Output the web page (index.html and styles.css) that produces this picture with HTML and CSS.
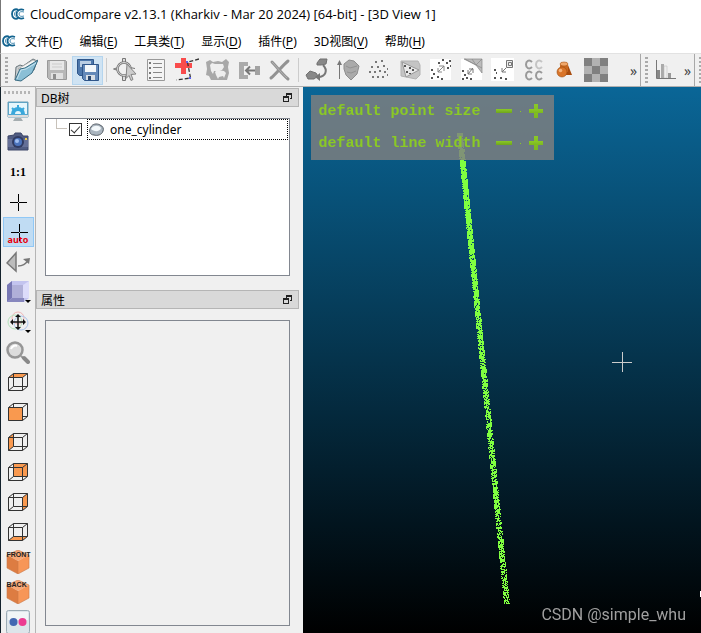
FILE: index.html
```html
<!DOCTYPE html>
<html lang="zh-CN">
<head>
  <meta charset="UTF-8" />
  <meta name="viewport" content="width=device-width, initial-scale=1.0"/>
  <title>CloudCompare</title>
  <link rel="stylesheet" href="styles.css">
</head>
<body>
  <div class="app">
    <header class="titlebar">
      <svg class="logo" viewBox="0 0 14 12"><path d="M7 1.500C3.500 .5 1 2.500 1 6s2.500 5.500 6 4.500M13 2C9 .5 5.500 2.500 5.500 6S9 11.500 13 10" fill="none" stroke="#12638f" stroke-width="1.800"/><path d="M7 3.500C5 3 3.500 4 3.500 6S5 9 7 8.500M13 4C10 3 8 4 8 6s2 3 5 2" fill="none" stroke="#4c8fb4" stroke-width="1"/></svg>
      <span>CloudCompare v2.13.1 (Kharkiv - Mar 20 2024) [64-bit] - [3D View 1]</span>
    </header>

    <nav class="menubar">
      <svg class="logo" viewBox="0 0 14 12"><path d="M7 1.500C3.500 .5 1 2.500 1 6s2.500 5.500 6 4.500M13 2C9 .5 5.500 2.500 5.500 6S9 11.500 13 10" fill="none" stroke="#12638f" stroke-width="1.800"/><path d="M7 3.500C5 3 3.500 4 3.500 6S5 9 7 8.500M13 4C10 3 8 4 8 6s2 3 5 2" fill="none" stroke="#4c8fb4" stroke-width="1"/></svg>
      <button>文件(<u>F</u>)</button>
      <button>编辑(<u>E</u>)</button>
      <button>工具类(<u>T</u>)</button>
      <button>显示(<u>D</u>)</button>
      <button>插件(<u>P</u>)</button>
      <button>3D视图(<u>V</u>)</button>
      <button>帮助(<u>H</u>)</button>
    </nav>

    <div class="toolbar">
      <span class="grip"></span>
      <button class="tool" aria-label="Open">
        <svg viewBox="0 0 24 24"><path d="M1 22 2 9l4-2 3 1 10-7 4 2-3 9z" fill="#c9ced0" stroke="#68747a"/><path d="M4 11 19 2l3 1-3 8z" fill="#f6f6f4" stroke="#a5a5a5" stroke-width=".7"/><path d="M1 22 6 11l5-1 13-8-6 13-11 8z" fill="#8bbfd6" stroke="#386b82"/><path d="M3 21 7 12l5-1 10-6" fill="none" stroke="#c7e3ee"/></svg>
      </button>
      <button class="tool" aria-label="Save">
        <svg viewBox="0 0 24 24"><path d="M2.500 2.500h18l1 1v18h-17l-2-2z" fill="#b8b8b8" stroke="#999"/><path d="M5 3h14v9H5z" fill="#e8e8e8"/><path d="M6 15h12v6H6z" fill="#e0e0e0"/><path d="M8 16h3v5H8z" fill="#8c8c8c"/><path d="M7 6h10M7 9h10" stroke="#ccc"/></svg>
      </button>
      <button class="tool active" aria-label="Save all">
        <svg viewBox="0 0 24 24"><path d="M1.500 1.500h16v16h-14l-2-2z" fill="#4d77ab" stroke="#2f568a"/><path d="M4 3h11v6H4z" fill="#b9cde3"/><path d="M6.500 6.500h16v16h-14l-2-2z" fill="#6489b8" stroke="#2f568a"/><path d="M9 7h11v7H9z" fill="#f3f7fa"/><path d="M10 17h9v5h-9z" fill="#d8dee5"/><path d="M12 18h3v4h-3z" fill="#2a476e"/></svg>
      </button>
      <span class="sep"></span>
      <button class="tool" aria-label="Pick rotation center">
        <svg viewBox="0 0 24 24"><path d="M9.500 5V.5h3V5M9.500 17v5.500h3V17M5 9.500.5 11 5 12.500M17 9.500l5 1" fill="#ddd" stroke="#777"/><circle cx="11" cy="11" r="6.500" fill="none" stroke="#777" stroke-width="2.500"/><circle cx="11" cy="11" r="6.500" fill="none" stroke="#d8d8d8"/><path d="m14 6 9 10-5 .5 2 5-2 1-2-5-3 3z" fill="#ccc" stroke="#858585"/></svg>
      </button>
      <button class="tool" aria-label="Point list">
        <svg viewBox="0 0 24 24"><path d="M3.500 1.500h17v21h-17z" fill="#f4f4f4" stroke="#999"/><path d="M9 5.500h9M9 9.500h9M9 14.500h9M9 19.500h9" stroke="#888"/><path d="M5 4h2v2H5zM5 9h2v2H5zM5 14h2v2H5zM5 19h2v2H5z" fill="#777"/></svg>
      </button>
      <button class="tool" aria-label="Pick points">
        <svg viewBox="0 0 24 24"><path d="M6 0h5v5h6v5h-6v6H6v-6H0V5h6z" fill="#f94c4c"/><path d="M24 1 12.500 4l3 16-14 2" fill="none" stroke="#333" stroke-width="1.300" stroke-dasharray="4 2"/><path d="M11 3h2v2h-2zM14 19h2v2h-2z" fill="#5b62ee"/></svg>
      </button>
      <button class="tool" aria-label="Clone">
        <svg viewBox="0 0 24 24"><path d="m0 4 4-2 3 2 5-1 4 1 4-3 3 3-1 5 1 6-2 7H5l-2-4-3-1 1-6z" fill="#a8a8a8"/><path d="m4 7 2-2 3 1h8l1 3-2 3-5 1H8l-1 3-2-3zM9 14l2-2 7 1 2 2-2 5-1-2-4 1-1 2-2-4z" fill="#eee"/></svg>
      </button>
      <button class="tool" aria-label="Merge">
        <svg viewBox="0 0 24 24"><path d="M2 4h9v4H7v9h4v4H2z" fill="#aaa"/><path d="M18 8h5v9h-5z" fill="#a2a2a2"/><path d="M18 12.500H9m4-4-4 4 4 4" fill="none" stroke="#777" stroke-width="2"/></svg>
      </button>
      <button class="tool" aria-label="Delete">
        <svg viewBox="0 0 24 24"><path d="M4 4c5 5 10 12 16 17M20 3C14 8 9 15 3 20" fill="none" stroke="#929292" stroke-width="3" stroke-linecap="round"/><path d="M4 4c5 5 10 12 15 16" fill="none" stroke="#b3b3b3"/></svg>
      </button>
      <span class="sep"></span>
      <button class="tool" aria-label="Register">
        <svg viewBox="0 0 24 24"><path d="m12 5 3-4h7l-1 5-5 1-4 0zM1 17l4-4 6 2 2 3-4 3H3z" fill="#888" stroke="#717171"/><path d="M18 7c5 5 3 12-5 12" fill="none" stroke="#777" stroke-width="2"/><path d="m15 15-5 4 5 4z" fill="#777"/></svg>
      </button>
      <button class="tool" aria-label="Compute normals">
        <svg viewBox="0 0 24 24"><path d="M3.500 21V5" stroke="#777"/><path d="m1 7 2.500-5L6 7z" fill="#777"/><path d="m8 6 5-4 5 1 5 5-2 8-6 6-5-5-2-6z" fill="#aaa" stroke="#8d8d8d"/><path d="m10 8 4 2 7-2M11 14l4 1 5-2" stroke="#929292" fill="none"/></svg>
      </button>
      <button class="tool" aria-label="Subsample">
        <svg viewBox="0 0 24 24"><g fill="#777"><path d="M8 3h2v2H8zM14 2h2v2h-2zM4 8h2v2H4zM10 8h2v2h-2zM16 7h2v2h-2zM2 13h2v2H2zM7 13h2v2H7zM12 12h2v2h-2zM17 13h2v2h-2zM5 18h2v2H5zM10 18h2v2h-2zM15 18h2v2h-2zM20 10h1v2h-1zM20 16h1v2h-1z"/></g></svg>
      </button>
      <button class="tool" aria-label="Sample points on mesh">
        <svg viewBox="0 0 24 24"><path d="M3 3h17l2 4v10l-4 4-15-3z" fill="#c4c4c4" stroke="#b2b2b2"/><path d="m4 4 17 8-13 7z" fill="#e8e8e8" stroke="#999"/><path d="M6 7h2v2H6zM11 9h2v2h-2zM8 13h2v2H8zM14 11h2v2h-2zM11 15h2v1h-2z" fill="#555"/></svg>
      </button>
      <button class="tool" aria-label="Cloud to cloud distance">
        <svg viewBox="0 0 24 24"><path d="M1 1h21v21H1z" fill="#fff"/><path d="m9 14 6-6m-5 0h5v5M9 10v4h4" fill="none" stroke="#888"/><path d="M2 11h2v2H2zM4 15h2v2H4zM2 19h2v2H2zM8 18h2v2H8zM12 20h2v2h-2zM9 4h2v2H9zM13 1h2v2h-2zM17 4h2v2h-2zM20 2h2v2h-2zM18 9h2v2h-2zM21 7h1v2h-1z" fill="#555"/></svg>
      </button>
      <button class="tool" aria-label="Cloud to mesh distance">
        <svg viewBox="0 0 24 24"><path d="M1 1h21v21H1z" fill="#fff"/><path d="M4 1h18v14l-6-8z" fill="#bcbcbc" stroke="#888" stroke-width=".7"/><path d="m5 1 11 6 6-6M12 1l4 6 6 3" fill="none" stroke="#888" stroke-width=".7"/><path d="m8 16 5-6m-4 1h4v4M8 12v4h4" fill="none" stroke="#777"/><path d="M2 12h2v2H2zM4 16h2v2H4zM2 20h2v2H2zM6 19h2v2H6zM10 20h2v2h-2z" fill="#555"/></svg>
      </button>
      <button class="tool" aria-label="Closest point set">
        <svg viewBox="0 0 24 24"><path d="M0 0h23v23H0z" fill="#fff"/><path d="M15.500 2.500h6v7h-6zM17.500 4.500h3v3h-3z" fill="#eee" stroke="#777"/><path d="m15 10-4 4m0-4v4h4" fill="none" stroke="#777"/><path d="M3 11h2v2H3zM5 14h1v2H5zM3 19h2v2H3zM9 19h2v2H9zM14 20h2v2h-2z" fill="#555"/></svg>
      </button>
      <button class="tool" aria-label="Connected components">
        <svg viewBox="0 0 24 24" fill="none" stroke="#999" stroke-width="2"><path d="M10 4C7 1 4 3 4 6.500S7 12 10 9M10 15c-3-3-6-1-6 2.500s3 5.500 6 2.500M20 15c-3-3-6-1-6 2.500s3 5.500 6 2.500"/><path d="M20 4c-3-3-6-1-6 2.500S17 12 20 9" stroke="#c4c4c4"/></svg>
      </button>
      <button class="tool" aria-label="Primitive factory">
        <svg viewBox="0 0 24 24"><path d="m15 7 4 10h-7z" fill="#a94d0f"/><path d="M7 6v8h8V6" fill="#ca681f"/><ellipse cx="11" cy="6" rx="4" ry="2" fill="#f0a76a" stroke="#a9500d" stroke-width=".6"/><circle cx="9" cy="14" r="5" fill="#d9752a" stroke="#9b4a0d" stroke-width=".6"/><circle cx="7.500" cy="12.500" r="1.800" fill="#f4b47e"/></svg>
      </button>
      <button class="tool" aria-label="Checkerboard">
        <svg viewBox="0 0 24 24"><path d="M0 0h24v24H0z" fill="#b2b2b2"/><path d="M0 0h8v8H0zM16 0h8v8h-8zM8 8h8v8H8zM0 16h8v8H0zM16 16h8v8h-8z" fill="#808080"/></svg>
      </button>
      <button class="more main-more" aria-label="More tools">»</button>
      <span class="edge"></span>
      <span class="grip"></span>
      <button class="tool" aria-label="Histogram">
        <svg viewBox="0 0 24 24"><path d="M3 12h3v8H3z" fill="#888"/><path d="M7 6h3v14H7z" fill="#aaa"/><path d="M10 8h3v12h-3z" fill="#eee" stroke="#bbb" stroke-width=".5"/><path d="M14 15h3v5h-3z" fill="#999"/><path d="M2.500 2v18.500H22" fill="none" stroke="#777"/></svg>
      </button>
      <button class="more" aria-label="More scalar tools">»</button>
      <span class="edge"></span>
      <span class="grip"></span>
    </div>

    <main class="workspace">
      <aside class="sidebar">
        <span class="grip-h"></span>
        <button aria-label="Full screen">
          <svg viewBox="0 0 24 24"><path d="M2 2h20v15H2z" fill="#50a8d3" stroke="#6d9eb6"/><path d="M3 3h18v11H3z" fill="#e5f6fc"/><path d="M5 14a7 7 0 0 1 14 0h-4a3 3 0 0 0-6 0z" fill="#39a8dc"/><path d="m6 8 2 2m10-2-2 2m-4-5v3" stroke="#39a8dc" stroke-width="2"/><path d="M2 15h20v2H2z" fill="#ddd"/><path d="M9 18h6l2 3H7z" fill="#a5adb0"/></svg>
        </button>
        <button aria-label="Screenshot">
          <svg viewBox="0 0 24 24"><path d="m2 6 6-1 1-2h6l2 3h5v14H2z" fill="#505c82" stroke="#3c4668"/><path d="M2 9h20v8H2z" fill="#657097"/><circle cx="12" cy="12" r="6" fill="#303b62"/><circle cx="12" cy="12" r="4" fill="#4b73bc"/><circle cx="11" cy="11" r="2" fill="#a0bdf0"/><path d="M19 8h2v2h-2z" fill="#f5d04e"/></svg>
        </button>
        <button class="ratio" aria-label="Zoom 1:1">1:1</button>
        <button aria-label="Pick center">
          <svg viewBox="0 0 24 24"><path d="M12.500 4v17M4 12.500h17" stroke="#000"/><path d="M12 12h1v1h-1z" fill="#efefef"/></svg>
        </button>
        <button class="active auto" aria-label="Auto pick center">
          <svg viewBox="0 0 24 24"><path d="M13.500 4v17M5 12.500h17" stroke="#000"/><path d="M13 12h1v1h-1z" fill="#c0dcf3"/></svg>
          <span>auto</span>
        </button>
        <button aria-label="Flip camera">
          <svg viewBox="0 0 24 24"><path d="M10 3v18L1 13z" fill="#bcbcbc" stroke="#777" stroke-width="1.500"/><path d="M12 16c5 0 7-2 10-5" fill="none" stroke="#777" stroke-width="1.500"/><path d="m17 9 7-1-1 6z" fill="#777"/></svg>
        </button>
        <button class="drop" aria-label="Projection mode">
          <svg viewBox="0 0 24 24"><path d="m1 5 5-4h17v17l-5 4H1z" fill="#c3c4ef"/><path d="m1 5 5-4v17l-5 4z" fill="#7777b3"/><path d="M6 5h11v13H6z" fill="#b0b0d8"/><path d="m1 22 5-4h12v4z" fill="#8787bd"/><path d="m17 5 6-4v17l-6 0z" fill="#dcdcfa"/></svg>
        </button>
        <button class="drop" aria-label="Pivot visibility">
          <svg viewBox="0 0 24 24"><circle cx="12" cy="8" r="6" fill="none" stroke="#f0b4b4"/><circle cx="9" cy="12" r="7" fill="none" stroke="#b5e2bc"/><circle cx="15" cy="13" r="7" fill="none" stroke="#abc8ee"/><path d="M12 5v14M5 12h14" stroke="#111" stroke-width="1.500"/><path d="m12 4 3 3H9zM12 20l-3-3h6zM4 12l3-3v6zM20 12l-3 3V9z" fill="#111"/></svg>
        </button>
        <button aria-label="Zoom">
          <svg viewBox="0 0 24 24"><circle cx="9" cy="10" r="7.500" fill="#dcdcdc" stroke="#969696" stroke-width="2.500"/><path d="m15 16 2 2" stroke="#999" stroke-width="2"/><path d="m18 18 4 4" stroke="#888" stroke-width="4" stroke-linecap="round"/><path d="M5 9c1-3 4-4 6-3" fill="none" stroke="#fff" stroke-width="2"/></svg>
        </button>
        <button aria-label="Top view">
          <svg class="cube" viewBox="0 0 24 24"><path class="face" d="m2.500 7.500 5-4h14l-5 4z"/><path class="wire" d="M2.500 7.500h14v13h-14zM7.500 3.500h14v13h-14zM2.500 7.500l5-4M16.500 7.500l5-4M2.500 20.500l5-4M16.500 20.500l5-4"/></svg>
        </button>
        <button aria-label="Front view">
          <svg class="cube" viewBox="0 0 24 24"><path class="wire" d="M7.500 3.500h14v13h-14zM2.500 20.500l5-4"/><path class="face" d="M2.500 7.500h14v13h-14z"/><path class="wire" d="M2.500 7.500h14v13h-14zM2.500 7.500l5-4M16.500 7.500l5-4M16.500 20.500l5-4"/></svg>
        </button>
        <button aria-label="Left view">
          <svg class="cube" viewBox="0 0 24 24"><path class="face" d="m2.500 7.500 5-4v13l-5 4z"/><path class="wire" d="M2.500 7.500h14v13h-14zM7.500 3.500h14v13h-14zM2.500 7.500l5-4M16.500 7.500l5-4M2.500 20.500l5-4M16.500 20.500l5-4"/></svg>
        </button>
        <button aria-label="Back view">
          <svg class="cube" viewBox="0 0 24 24"><path class="face" d="M7.500 3.500h14v13h-14z"/><path class="wire" d="M2.500 7.500h14v13h-14zM7.500 3.500h14v13h-14zM2.500 7.500l5-4M16.500 7.500l5-4M2.500 20.500l5-4M16.500 20.500l5-4"/></svg>
        </button>
        <button aria-label="Right view">
          <svg class="cube" viewBox="0 0 24 24"><path class="face" d="m16.500 7.500 5-4v13l-5 4z"/><path class="wire" d="M2.500 7.500h14v13h-14zM7.500 3.500h14v13h-14zM2.500 7.500l5-4M16.500 7.500l5-4M2.500 20.500l5-4M16.500 20.500l5-4"/></svg>
        </button>
        <button aria-label="Bottom view">
          <svg class="cube" viewBox="0 0 24 24"><path class="face" d="m2.500 20.500 5-4h14l-5 4z"/><path class="wire" d="M2.500 7.500h14v13h-14zM7.500 3.500h14v13h-14zM2.500 7.500l5-4M16.500 7.500l5-4M2.500 20.500l5-4M16.500 20.500l5-4"/></svg>
        </button>
        <button class="iso" aria-label="Isometric front">
          <svg viewBox="0 0 24 24"><path d="m12 0 11 5-11 6L1 5z" fill="#f9a877"/><path d="m1 5 11 6v13L1 18z" fill="#dd7c42"/><path d="m23 5-11 6v13l11-6z" fill="#f79658"/><path d="m12 0 11 5v13l-11 6-11-6V5zM12 11v13" fill="none" stroke="#c97a4c" stroke-width=".6"/></svg>
          <span>FRONT</span>
        </button>
        <button class="iso" aria-label="Isometric back">
          <svg viewBox="0 0 24 24"><path d="m12 0 11 5-11 6L1 5z" fill="#f9a877"/><path d="m1 5 11 6v13L1 18z" fill="#dd7c42"/><path d="m23 5-11 6v13l11-6z" fill="#f79658"/><path d="m12 0 11 5v13l-11 6-11-6V5zM12 11v13" fill="none" stroke="#c97a4c" stroke-width=".6"/></svg>
          <span>BACK</span>
        </button>
        <button aria-label="Stereo mode">
          <svg viewBox="0 0 24 24"><rect x=".5" y=".5" width="23" height="23" rx="2" fill="#dde5ea" stroke="#9cabb5"/><path d="M2 2h20v8H2z" fill="#f1f5f7"/><circle cx="7.500" cy="12" r="4" fill="#4267b2"/><circle cx="16.500" cy="12" r="4" fill="#ec3b91"/></svg>
        </button>
      </aside>

      <div class="docks">
        <section class="dock dock-tree">
          <h2>DB树
            <button aria-label="Float"><svg viewBox="0 0 9 9"><path d="M3 0h6v6H7V5h1V2H4v1H3z"/><path d="M0 3h6v6H0zm1 2v3h4V5z" fill-rule="evenodd"/></svg></button>
          </h2>
          <ul class="tree">
            <li>
              <span class="branch"></span>
              <input type="checkbox" id="cylinder" checked>
              <label for="cylinder">
                <svg viewBox="0 0 16 14"><path d="M3 4c1-3 6-4 9-2 3 1 4 4 3 6-1 4-6 5-9 4-4 0-6-4-3-8z" fill="#aab5bf" stroke="#555d66"/><path d="M3 6c2-4 8-4 10-1-1 4-7 4-10 1z" fill="#f3f8fb"/></svg>
                one_cylinder
              </label>
            </li>
          </ul>
        </section>
        <section class="dock dock-props">
          <h2>属性
            <button aria-label="Float"><svg viewBox="0 0 9 9"><path d="M3 0h6v6H7V5h1V2H4v1H3z"/><path d="M0 3h6v6H0zm1 2v3h4V5z" fill-rule="evenodd"/></svg></button>
          </h2>
          <div class="props"></div>
        </section>
      </div>

      <section class="view">
        <canvas class="cloud" id="cloud" width="398" height="546"></canvas>
        <div class="hot-zone">
          <span>default point size</span>
          <button class="minus" aria-label="Smaller points"></button>
          <i></i>
          <button class="plus" aria-label="Larger points"></button>
          <span>default line width</span>
          <button class="minus" aria-label="Thinner lines"></button>
          <i></i>
          <button class="plus" aria-label="Thicker lines"></button>
        </div>
        <svg class="pivot" viewBox="0 0 20 20"><path d="M10.500 0v20M0 10.500h20" stroke="#ccc"/></svg>
        <span class="handle"></span>
        <span class="watermark">CSDN @simple_whu</span>
      </section>
    </main>
  </div>

  <script>
    // scatter one_cylinder's points along its axis
    const ctx = document.getElementById('cloud').getContext('2d');
    let seed = 7;
    function rand() {
      seed = (seed * 16807) % 2147483647;
      return seed / 2147483647;
    }
    ctx.fillStyle = '#80ff40';
    for (let y = 46; y < 517; y++) {
      const t = (y - 46) / 471;
      const left = Math.round(154 + t * 47);
      const density = 1 - t * 0.35;
      for (let x = 0; x < 6; x++) {
        const rim = x === 0 || x === 5 ? 0.85 : 1;
        if (rand() < density * rim) ctx.fillRect(left + x, y, 1, 1);
      }
    }
  </script>
</body>
</html>
```

FILE: styles.css
```css
* {
  box-sizing: border-box;
}
body {
  margin: 0;
  font-family: "Noto Sans", "Noto Sans CJK SC", sans-serif;
  font-size: 12px;
  color: #000;
  background: #f0f0f0;
}
button {
  padding: 0;
  border: 0;
  background: none;
  font: inherit;
  color: inherit;
}
svg {
  display: block;
}
.app {
  display: flex;
  flex-direction: column;
  height: 100vh;
  overflow: hidden;
}
.titlebar {
  display: flex;
  align-items: center;
  gap: 5px;
  height: 30px;
  padding: 0 0 2px 10px;
  background: #fff;
  border-left: 1px solid #777;
  font-family: "Open Sans", sans-serif;
  font-size: 13px;
  white-space: nowrap;
}
.logo {
  width: 14px;
  height: 12px;
}
.menubar {
  display: flex;
  align-items: center;
  gap: 17px;
  height: 23px;
  padding: 0 0 2px 1px;
  background: #fff;
  border-left: 1px solid #777;
  white-space: nowrap;
}
.menubar .logo {
  margin-right: -8px;
}
.menubar u {
  text-underline-offset: 2px;
}

/* main toolbar */
.toolbar {
  display: flex;
  align-items: center;
  height: 34px;
  flex: none;
  overflow: hidden;
  border-top: 1px solid #e2e2e2;
  border-bottom: 1px solid #b0b0b0;
  border-left: 1px solid #777;
}
.tool {
  display: flex;
  flex: none;
  align-items: center;
  justify-content: center;
  width: 31px;
  height: 29px;
}
.tool svg {
  width: 24px;
  height: 24px;
}
.tool.active {
  background: #cfe3f3;
  border: 1px solid #b5d5ee;
}
.grip {
  flex: none;
  width: 3px;
  height: 27px;
  margin: 0 2px 0 4px;
  background: repeating-linear-gradient(#aaa 0 2px, transparent 2px 4px);
}
.sep {
  flex: none;
  width: 6px;
  height: 24px;
  background: linear-gradient(#ccc, #ccc) center / 1px 100% no-repeat;
}
.more {
  flex: none;
  width: 13px;
  font-size: 14px;
  color: #444;
}
.main-more {
  margin-left: 16px;
}
.edge {
  flex: none;
  width: 1px;
  height: 32px;
  background: #a8a8a8;
}

/* left toolbar */
.workspace {
  display: flex;
  flex: 1;
  min-height: 0;
}
.sidebar {
  display: flex;
  flex: none;
  flex-direction: column;
  align-items: center;
  width: 36px;
  overflow: hidden;
  border-left: 1px solid #14222c;
  border-right: 1px solid #b5b5b5;
}
.grip-h {
  flex: none;
  width: 28px;
  height: 3px;
  margin: 4px 0 3px;
  background: repeating-linear-gradient(90deg, #b5b5b5 0 2px, transparent 2px 4px);
}
.sidebar button {
  position: relative;
  display: flex;
  flex: none;
  align-items: center;
  justify-content: center;
  width: 31px;
  height: 30px;
}
.sidebar svg {
  width: 24px;
  height: 24px;
}
.sidebar .active {
  background: #c0dcf3;
  border: 1px solid #90c8f6;
}
.sidebar .ratio {
  font: bold 12px "Liberation Serif", serif;
}
.auto span {
  position: absolute;
  bottom: 0;
  font-size: 9px;
  font-weight: bold;
  line-height: 12px;
  color: #e8000d;
}
.drop::after {
  content: "";
  position: absolute;
  right: 3px;
  bottom: 4px;
  border: 3px solid transparent;
  border-top-color: #000;
  border-bottom: 0;
}
.face {
  fill: #f9994f;
}
.wire {
  fill: none;
  stroke: #333;
}
.iso span {
  position: absolute;
  top: 4px;
  left: 4px;
  font: bold 7px/8px "Liberation Sans", sans-serif;
  color: #222;
}

/* docked panels */
.docks {
  display: flex;
  flex-direction: column;
  gap: 14px;
  width: calc(38% + 1px);
  padding: 1px 4px 7px 0;
}
.dock {
  display: flex;
  flex-direction: column;
  gap: 11px;
}
.dock-tree {
  flex: 188;
}
.dock-props {
  flex: 336;
}
.dock h2 {
  display: flex;
  align-items: center;
  justify-content: space-between;
  height: 19px;
  margin: 0;
  padding: 0 6px 0 4px;
  background: #d9d9d9;
  border: 1px solid #b5b5b5;
  font-size: 12px;
  font-weight: normal;
}
.dock h2 svg {
  width: 9px;
  height: 9px;
  fill: #222;
}
.tree,
.props {
  flex: 1;
  margin: 0 9px;
  padding: 0;
  border: 1px solid #828790;
}
.tree {
  background: #fff;
  list-style: none;
}
.tree li {
  display: flex;
  align-items: center;
  height: 21px;
}
.branch {
  align-self: flex-start;
  width: 11px;
  height: 10px;
  margin: 0 2px 0 10px;
  border: solid #c8c2ba;
  border-width: 0 0 1px 1px;
}
.tree input {
  display: flex;
  justify-content: center;
  width: 13px;
  height: 13px;
  margin: 0 5px 0 0;
  appearance: none;
  background: #fff;
  border: 1px solid #333;
}
.tree input:checked::after {
  content: "";
  width: 4px;
  height: 8px;
  border: solid #333;
  border-width: 0 1px 1px 0;
  transform: rotate(42deg);
}
.tree label {
  display: flex;
  flex: 1;
  align-items: center;
  gap: 6px;
  height: 21px;
  margin-right: 1px;
  border: 1px dotted #000;
}
.tree label svg {
  width: 16px;
  height: 14px;
}

/* 3D view */
.view {
  position: relative;
  flex: 1;
  padding: 8px;
  overflow: hidden;
  background: linear-gradient(#0a6697, #000);
}
.cloud {
  position: absolute;
  top: 0;
  left: 0;
}
.hot-zone {
  position: relative;
  display: grid;
  grid-template-columns: 178px 16px 16px 16px;
  grid-auto-rows: 32px;
  align-items: center;
  width: 243px;
  height: 65px;
  padding-left: 7px;
  background: rgba(128, 128, 128, 0.83);
  font: bold 15px "Liberation Mono", monospace;
  color: #8ac926;
}
.hot-zone i {
  justify-self: center;
  width: 1px;
  height: 1px;
  background: #8ac926;
}
.hot-zone button {
  height: 16px;
  background: linear-gradient(#8ac926, #6fa51c) center / 16px 4px no-repeat;
}
.hot-zone .plus {
  background: linear-gradient(#8ac926, #7cb81f) center / 14px 4px no-repeat, linear-gradient(#8ac926, #7cb81f) center / 4px 14px no-repeat;
}
.pivot {
  position: absolute;
  top: 265px;
  left: 309px;
  width: 20px;
  height: 20px;
}
.handle {
  position: absolute;
  right: 0;
  bottom: 36px;
  width: 1px;
  height: 6px;
  background: #fff;
}
.watermark {
  position: absolute;
  right: 15px;
  bottom: 8px;
  font: 16px/20px Roboto, sans-serif;
  color: #a0a0a0;
}
```
